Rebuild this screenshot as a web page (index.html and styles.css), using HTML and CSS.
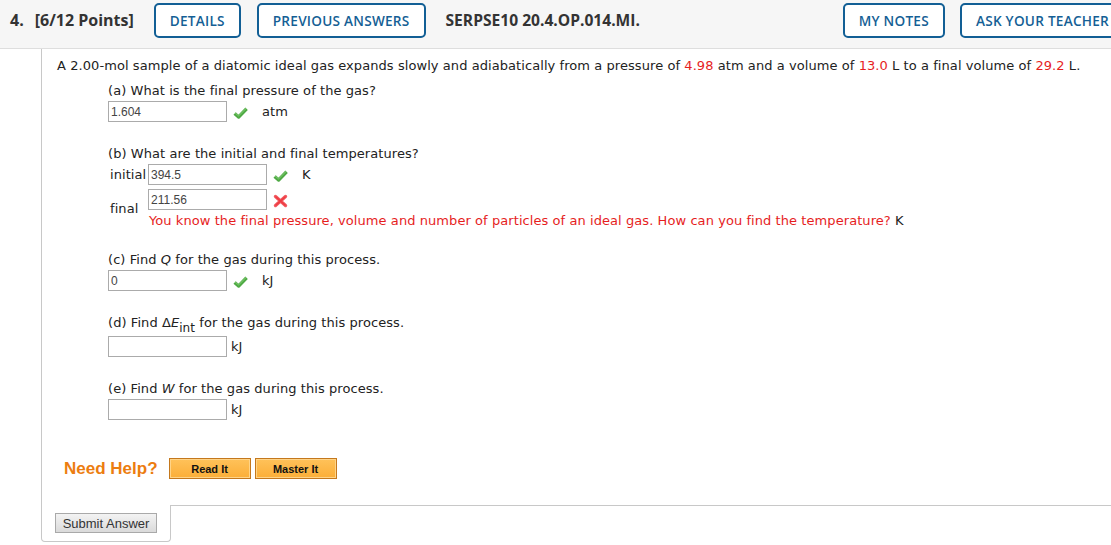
FILE: index.html
```html
<!DOCTYPE html>
<html>
<head>
<meta charset="utf-8">
<link rel="stylesheet" href="styles.css">
</head>
<body>
<div class="topbar">
  <span class="qnum">4.</span>
  <span class="qpts">[6/12 Points]</span>
  <button class="tbtn">DETAILS</button>
  <button class="tbtn wide-gap">PREVIOUS ANSWERS</button>
  <span class="qcode">SERPSE10 20.4.OP.014.MI.</span>
  <button class="tbtn notes">MY NOTES</button>
  <button class="tbtn last">ASK YOUR TEACHER</button>
</div>
<div class="question">
  <div class="qbody">
    <p class="stem">A 2.00-mol sample of a diatomic ideal gas expands slowly and adiabatically from a pressure of <span class="red">4.98</span> atm and a volume of <span class="red">13.0</span> L to a final volume of <span class="red">29.2</span> L.</p>

    <div class="part first">
      <div class="plabel">(a) What is the final pressure of the gas?</div>
      <div class="arow">
        <input class="ans" type="text" value="1.604" readonly>
        <span class="mark"><svg width="15" height="12" viewBox="0 0 15 12"><path d="M1.6 6.4 L5.6 10 L13.6 1.8" fill="none" stroke="#4faa45" stroke-width="3.4" stroke-linejoin="round"/><path d="M2.2 6 L5.6 8.9 L13 1.5" fill="none" stroke="#86d076" stroke-width="1"/></svg></span>
        <span class="unit">atm</span>
      </div>
    </div>

    <div class="part">
      <div class="plabel">(b) What are the initial and final temperatures?</div>
      <div class="tgrid">
        <div class="tlabel">initial</div>
        <div class="arow">
          <input class="ans" type="text" value="394.5" readonly>
          <span class="mark"><svg width="15" height="12" viewBox="0 0 15 12"><path d="M1.6 6.4 L5.6 10 L13.6 1.8" fill="none" stroke="#4faa45" stroke-width="3.4" stroke-linejoin="round"/><path d="M2.2 6 L5.6 8.9 L13 1.5" fill="none" stroke="#86d076" stroke-width="1"/></svg></span>
          <span class="unit">K</span>
        </div>
        <div class="tlabel">final</div>
        <div class="tcell">
          <div class="arow">
            <input class="ans" type="text" value="211.56" readonly>
            <span class="mark"><svg width="15" height="14" viewBox="0 0 15 14"><path d="M2.5 2.5 L12.5 11.5 M12.5 2.5 L2.5 11.5" fill="none" stroke="#f25a60" stroke-width="3.4" stroke-linecap="round"/><path d="M3 3 L12 11 M12 3 L3 11" fill="none" stroke="#ee3b42" stroke-width="1.6" stroke-linecap="round"/></svg></span>
          </div>
          <div class="hint"><span class="red">You know the final pressure, volume and number of particles of an ideal gas. How can you find the temperature?</span> K</div>
        </div>
      </div>
    </div>

    <div class="part">
      <div class="plabel">(c) Find <i>Q</i> for the gas during this process.</div>
      <div class="arow">
        <input class="ans" type="text" value="0" readonly>
        <span class="mark"><svg width="15" height="12" viewBox="0 0 15 12"><path d="M1.6 6.4 L5.6 10 L13.6 1.8" fill="none" stroke="#4faa45" stroke-width="3.4" stroke-linejoin="round"/><path d="M2.2 6 L5.6 8.9 L13 1.5" fill="none" stroke="#86d076" stroke-width="1"/></svg></span>
        <span class="unit">kJ</span>
      </div>
    </div>

    <div class="part">
      <div class="plabel sublabel">(d) Find &Delta;<i>E</i><sub>int</sub> for the gas during this process.</div>
      <div class="arow">
        <input class="ans" type="text" value="" readonly>
        <span class="unit">kJ</span>
      </div>
    </div>

    <div class="part">
      <div class="plabel">(e) Find <i>W</i> for the gas during this process.</div>
      <div class="arow">
        <input class="ans" type="text" value="" readonly>
        <span class="unit">kJ</span>
      </div>
    </div>

    <div class="help">
      <span class="need">Need Help?</span>
      <button class="hbtn">Read It</button>
      <button class="hbtn">Master It</button>
    </div>
  </div>
  <div class="footer">
    <div class="tab"><button class="submit">Submit Answer</button></div>
    <div class="filler"></div>
  </div>
</div>
</body>
</html>
```
FILE: styles.css
```css
html, body {
  margin: 0;
  overflow: hidden;
  background: #ffffff;
}
body {
  font-family: "DejaVu Sans", Verdana, sans-serif;
  font-size: 13px;
  letter-spacing: 0.07px;
  color: #222;
}
.topbar {
  display: flex;
  align-items: flex-start;
  width: 1135px;
  height: 49px;
  box-sizing: border-box;
  padding: 3px 10px 0 10px;
  background: #f6f6f6;
  border-bottom: 1px solid #dedede;
  font-family: "Open Sans", sans-serif;
  letter-spacing: 0;
}
.qnum, .qpts, .qcode {
  font-weight: 700;
  font-size: 16px;
  line-height: 34px;
  color: #333;
}
.qnum { margin-right: 11px; }
.qpts { margin-right: 20px; }
.qcode { flex: 1; font-size: 15.6px; }
.tbtn {
  height: 35px;
  box-sizing: border-box;
  padding: 0 14px;
  margin: 0 16px 0 0;
  border: 2px solid #125f95;
  border-radius: 5px;
  background: #ffffff;
  font-family: "Open Sans", sans-serif;
  font-weight: 600;
  font-size: 13.6px;
  letter-spacing: 0.25px;
  color: #155f95;
}
.tbtn.wide-gap { margin-right: 20px; }
.tbtn.notes { margin-right: 15px; }
.tbtn.last { margin-right: 0; }

.question { margin-left: 41px; }
.qbody {
  border-left: 1px solid #c8c8c8;
  padding: 8px 0 26px 15px;
}
.stem {
  margin: 0;
  line-height: 18px;
}
.red { color: #e61e1e; }
.part {
  margin: 22px 0 0 51px;
}
.part.first { margin-top: 6px; }
.plabel {
  line-height: 18px;
  padding-top: 1px;
  margin-bottom: 1px;
}
.plabel.sublabel { margin-bottom: 4px; }
.plabel sub {
  font-size: 12px;
  line-height: 0;
  vertical-align: -5px;
}
.arow {
  display: flex;
  align-items: center;
  height: 21px;
}
.ans {
  width: 119px;
  height: 21px;
  box-sizing: border-box;
  margin: 0;
  padding: 0 2px;
  border: 1px solid #ababab;
  font-family: "Liberation Sans", Arial, sans-serif;
  font-size: 12px;
  letter-spacing: 0;
  color: #444;
  background: #fff;
}
.mark {
  display: flex;
  align-items: center;
  width: 15px;
  margin: 2px 10px 0 6px;
}
.unit { margin-left: 4px; }
.tgrid {
  display: grid;
  grid-template-columns: 40px auto;
  row-gap: 4px;
  align-items: center;
  margin-top: 1px;
}
.tlabel { padding-left: 2px; }
.hint {
  line-height: 15px;
  padding-top: 3px;
  margin-left: 1px;
}
.help {
  display: flex;
  align-items: center;
  height: 21px;
  margin: 38px 0 0 7px;
}
.need {
  font-family: "Liberation Sans", Arial, sans-serif;
  font-weight: 700;
  font-size: 17px;
  letter-spacing: 0;
  color: #ec7d10;
  margin-right: 11px;
}
.hbtn {
  width: 82px;
  height: 21px;
  box-sizing: border-box;
  margin: 0 4px 0 0;
  padding: 0;
  border: 1px solid #c4781d;
  box-shadow: inset 0 0 0 1px #ffd488;
  background: linear-gradient(#ffc25a, #fbae38);
  font-family: "Liberation Sans", Arial, sans-serif;
  font-weight: 700;
  font-size: 11px;
  letter-spacing: 0;
  color: #111;
}
.footer {
  display: flex;
}
.tab {
  width: 130px;
  height: 37px;
  box-sizing: border-box;
  padding: 8px 0 0 13px;
  border: 1px solid #c8c8c8;
  border-top: none;
  border-radius: 0 0 4px 4px;
}
.filler {
  flex: 1;
  border-top: 1px solid #c8c8c8;
}
.submit {
  display: block;
  width: 102px;
  height: 20px;
  box-sizing: border-box;
  margin: 0;
  padding: 0;
  border: 1px solid #a9a9a9;
  background: linear-gradient(#f3f3f3, #dadada);
  font-family: "Liberation Sans", Arial, sans-serif;
  font-size: 13px;
  letter-spacing: 0;
  color: #333;
}
```
